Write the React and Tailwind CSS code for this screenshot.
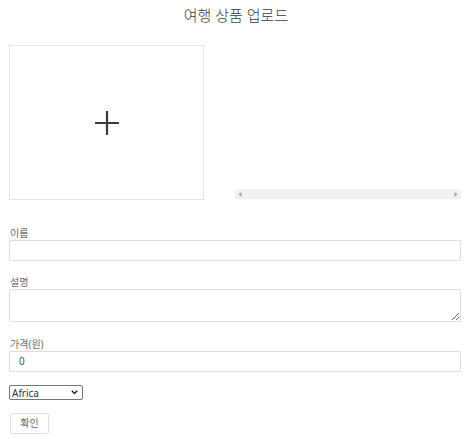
import React from "react";

const font = { fontFamily: '"Noto Sans", "Noto Sans CJK KR", sans-serif' };

function Label({ children, className = "" }) {
  return (
    <div className={"text-[10px] leading-[12px] text-[#6a6a6a] ml-px " + className}>{children}</div>
  );
}

export default function App() {
  return (
    <div className="w-[474px] h-[439px] bg-white px-[9px] pt-[4px]" style={font}>
      <h1 className="text-center text-[15px] leading-[22px] text-[#3a3a3a] font-light mr-[2px]">
        여행 상품 업로드
      </h1>
      <div className="mt-[19px] flex items-end justify-between pr-[4px]">
        <div className="w-[195px] h-[155px] border border-[#e3e3e3] flex items-center justify-center">
          <svg width="26" height="26" viewBox="0 0 26 26" className="mt-px ml-px">
            <path d="M13 1v24M1 13h24" stroke="#3a3a3a" strokeWidth="2.2" fill="none" />
          </svg>
        </div>
        <div className="w-[226px] h-[10px] mb-px bg-[#f1f1f1] flex items-center justify-between px-[3px]">
          <svg width="4" height="5" viewBox="0 0 4 5"><path d="M3.5 0v5L0.5 2.5z" fill="#a0a0a0" /></svg>
          <svg width="4" height="5" viewBox="0 0 4 5"><path d="M0.5 0v5L3.5 2.5z" fill="#a0a0a0" /></svg>
        </div>
      </div>

      <Label className="mt-[27px]">이름</Label>
      <div className="mt-px h-[21px] w-[452px] border border-[#dcdcdc] rounded-[2px]"></div>

      <Label className="mt-[15px]">설명</Label>
      <textarea className="mt-px block h-[33px] w-[452px] border border-[#dcdcdc] rounded-[2px] resize-y outline-none"></textarea>

      <Label className="mt-[16px]">가격(원)</Label>
      <div className="mt-px h-[21px] w-[452px] border border-[#dcdcdc] rounded-[2px] flex items-center pl-[9px] text-[10px] text-[#555]">
        0
      </div>

      <div className="mt-[13px] h-[15px] w-[74px] border border-[#767676] rounded-[2px] flex items-center justify-between pl-[2px] pr-[4px] text-[10px] text-[#333]">
        <span className="leading-none">Africa</span>
        <svg width="7" height="5" viewBox="0 0 7 5"><path d="M0.8 0.8L3.5 3.6L6.2 0.8" stroke="#222" strokeWidth="1.4" fill="none" /></svg>
      </div>

      <div className="mt-[13px] h-[21px] w-[39px] ml-px border border-[#e0e0e0] rounded-[2px] flex items-center justify-center text-[10px] text-[#666]">
        확인
      </div>
    </div>
  );
}
